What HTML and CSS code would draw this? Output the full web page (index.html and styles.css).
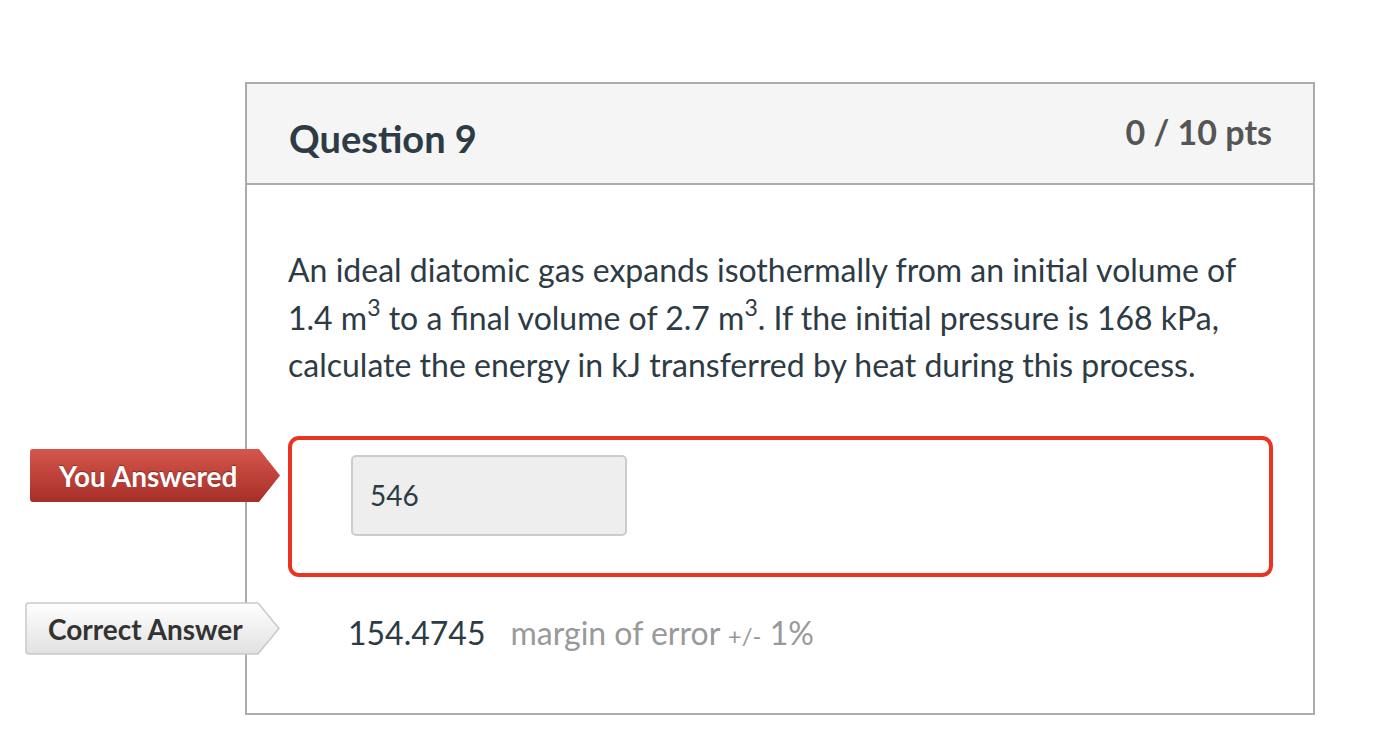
FILE: index.html
```html
<!DOCTYPE html>
<html lang="en">
<head>
<meta charset="utf-8">
<title>Question 9</title>
<link rel="stylesheet" href="styles.css">
</head>
<body>
<div class="page">
  <div class="card">
    <div class="header">
      <h2 class="title">Question 9</h2>
      <div class="pts">0 / 10 pts</div>
    </div>
    <div class="body">
      <p class="text">An ideal diatomic gas expands isothermally from an initial volume of 1.4 m<sup>3</sup> to a final volume of 2.7 m<sup>3</sup>. If the initial pressure is 168 kPa, calculate the energy in kJ transferred by heat during this process.</p>
      <div class="answer wrong">
        <div class="badge badge-red">
          <svg class="badge-shape" viewBox="0 0 250 53" preserveAspectRatio="none" aria-hidden="true">
            <defs>
              <linearGradient id="gr" x1="0" y1="0" x2="0" y2="1">
                <stop offset="0" stop-color="#d6564c"/>
                <stop offset="1" stop-color="#a62f28"/>
              </linearGradient>
            </defs>
            <path d="M3,0 H229 L250,26.5 L229,53 H3 Q0,53 0,50 V3 Q0,0 3,0 Z" fill="url(#gr)"/>
          </svg>
          <span class="badge-text">You Answered</span>
        </div>
        <div class="box">
          <div class="input">546</div>
        </div>
      </div>
      <div class="answer correct">
        <div class="badge badge-gray">
          <svg class="badge-shape" viewBox="0 0 255 53" preserveAspectRatio="none" aria-hidden="true">
            <defs>
              <linearGradient id="gg" x1="0" y1="0" x2="0" y2="1">
                <stop offset="0" stop-color="#ffffff"/>
                <stop offset="1" stop-color="#e1e1e1"/>
              </linearGradient>
            </defs>
            <path d="M4,1 H233 L254,26.5 L233,52 H4 Q1,52 1,49 V4 Q1,1 4,1 Z" fill="url(#gg)" stroke="#c9c9c9" stroke-width="1.5"/>
          </svg>
          <span class="badge-text">Correct Answer</span>
        </div>
        <div class="value">154.4745<span class="margin">margin of error <span class="pm">+/-</span> 1%</span></div>
      </div>
    </div>
  </div>
</div>
</body>
</html>
```

FILE: styles.css
```css
html, body {
  margin: 0;
  padding: 0;
  background: #ffffff;
}

body {
  font-family: Lato, "Open Sans", "Liberation Sans", sans-serif;
  color: #2d3b45;
}

.page {
  padding: 82px 0 0 245px;
}

.card {
  width: 1066px;
  height: 629px;
  border: 2px solid #ababab;
  background: #ffffff;
}

.header {
  display: flex;
  justify-content: space-between;
  align-items: flex-start;
  height: 99px;
  padding: 0 41px 0 42px;
  background: #f5f5f5;
  border-bottom: 2px solid #ababab;
}

.title {
  margin: 32px 0 0 0;
  font-size: 38px;
  line-height: 44px;
  font-weight: 700;
  color: #2d3b45;
}

.pts {
  margin-top: 28px;
  font-size: 34px;
  line-height: 40px;
  font-weight: 700;
  color: #555555;
}

.body {
  padding: 61px 40px 0 41px;
}

.text {
  margin: 0;
  font-size: 32px;
  line-height: 47.5px;
  color: #2d3b45;
}

.text sup {
  font-size: 23px;
  line-height: 0;
  vertical-align: 14px;
}

.answer {
  position: relative;
}

.wrong {
  margin-top: 47px;
}

.box {
  height: 118px;
  border: 4px solid #ea3323;
  border-radius: 11px;
  padding: 15px 0 0 59px;
}

.input {
  width: 255px;
  height: 75px;
  padding: 2px 0 0 17px;
  box-sizing: content-box;
  background: #eeeeee;
  border: 2px solid #cccccc;
  border-radius: 5px;
  font-size: 28px;
  line-height: 73px;
  color: #2d3b45;
}

.badge {
  position: absolute;
  display: flex;
  align-items: center;
}

.badge-shape {
  position: absolute;
  inset: 0;
  width: 100%;
  height: 100%;
}

.badge-text {
  position: relative;
  font-size: 28px;
  font-weight: 700;
}

.badge-red {
  left: -258px;
  top: 13px;
  width: 250px;
  height: 53px;
}

.badge-red .badge-text {
  padding: 2px 0 0 29px;
  color: #ffffff;
  text-shadow: 0 -1px 1px rgba(0, 0, 0, 0.35);
}

.badge-gray {
  left: -263px;
  top: 0;
  width: 255px;
  height: 53px;
}

.badge-gray .badge-text {
  padding: 1px 0 0 23px;
  color: #333333;
}

.correct {
  margin-top: 25px;
  height: 53px;
  display: flex;
  align-items: center;
}

.value {
  padding: 8px 0 0 60px;
  font-size: 32px;
  color: #2d3b45;
}

.margin {
  margin-left: 25px;
  color: #999999;
}

.pm {
  font-size: 24px;
}
```
